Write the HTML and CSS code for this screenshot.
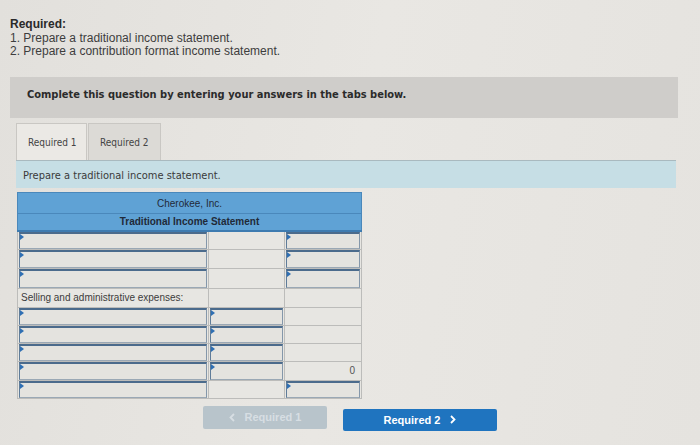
FILE: index.html
```html
<!DOCTYPE html>
<html>
<head>
<meta charset="utf-8">
<link rel="stylesheet" href="styles.css">
</head>
<body>
<div class="page">
  <div class="required">
    <div class="req-title">Required:</div>
    <div>1. Prepare a traditional income statement.</div>
    <div>2. Prepare a contribution format income statement.</div>
  </div>

  <div class="banner">Complete this question by entering your answers in the tabs below.</div>

  <div class="tabs">
    <div class="tab active">Required 1</div>
    <div class="tab">Required 2</div>
  </div>
  <div class="strip">Prepare a traditional income statement.</div>

  <table class="stmt">
    <colgroup><col class="c1"><col class="c2"><col class="c3"></colgroup>
    <tr class="h1"><td colspan="3">Cherokee, Inc.</td></tr>
    <tr class="h2"><td colspan="3">Traditional Income Statement</td></tr>
    <tr class="r18"><td><div class="inp"></div></td><td></td><td><div class="inp"></div></td></tr>
    <tr class="r19"><td><div class="inp"></div></td><td></td><td><div class="inp"></div></td></tr>
    <tr class="r20"><td><div class="inp"></div></td><td></td><td><div class="inp"></div></td></tr>
    <tr class="r19"><td class="label">Selling and administrative expenses:</td><td></td><td></td></tr>
    <tr class="r18"><td><div class="inp"></div></td><td><div class="inp"></div></td><td></td></tr>
    <tr class="r18"><td><div class="inp"></div></td><td><div class="inp"></div></td><td></td></tr>
    <tr class="r18"><td><div class="inp"></div></td><td><div class="inp"></div></td><td></td></tr>
    <tr class="r19"><td><div class="inp"></div></td><td><div class="inp"></div></td><td class="num">0</td></tr>
    <tr class="r18"><td><div class="inp"></div></td><td></td><td><div class="inp"></div></td></tr>
  </table>

  <div class="nav">
    <div class="btn prev">
      <svg class="chev" width="6" height="9" viewBox="0 0 6 9"><polyline points="5,1 1.5,4.5 5,8" fill="none" stroke="currentColor" stroke-width="1.8"/></svg>
      <span>Required 1</span>
    </div>
    <div class="btn next">
      <span>Required 2</span>
      <svg class="chev" width="6" height="9" viewBox="0 0 6 9"><polyline points="1,1 4.5,4.5 1,8" fill="none" stroke="currentColor" stroke-width="1.8"/></svg>
    </div>
  </div>
</div>
</body>
</html>
```

FILE: styles.css
```css
html, body {
  margin: 0;
  padding: 0;
}
body {
  width: 700px;
  height: 445px;
  overflow: hidden;
  background: linear-gradient(100deg, #e2e0dc 0%, #e9e7e3 50%, #e5e3df 100%);
  font-family: "Liberation Sans", Arial, sans-serif;
  color: #333;
}
.page {
  padding: 18px 0 0 0;
}
.required {
  padding-left: 10px;
  font-size: 12px;
  line-height: 13.5px;
  color: #3d3d3d;
}
.req-title {
  font-weight: bold;
  color: #2a2a2a;
}
.banner {
  margin: 18px 22px 0 10px;
  height: 41px;
  box-sizing: border-box;
  padding: 11px 0 0 17px;
  background: #cfcdca;
  font-family: "DejaVu Sans Condensed", "DejaVu Sans", sans-serif;
  font-weight: bold;
  font-size: 11px;
  color: #2b2b2b;
}
.tabs {
  display: flex;
  margin: 5px 0 0 16px;
  height: 37px;
}
.tab {
  box-sizing: border-box;
  height: 37px;
  border: 1px solid #c9c7c3;
  border-bottom: none;
  background: #dcdad6;
  font-family: "DejaVu Sans Condensed", "DejaVu Sans", sans-serif;
  font-size: 10px;
  color: #444;
  padding: 13px 0 0 11px;
}
.tab.active {
  width: 71px;
  background: #ebe9e5;
  margin-right: 1px;
}
.tab + .tab {
  width: 73px;
}
.strip {
  margin: 0 24px 0 16px;
  height: 28px;
  box-sizing: border-box;
  border-top: 1px solid #a9b9bf;
  background: #c6dee5;
  font-family: "DejaVu Sans Condensed", "DejaVu Sans", sans-serif;
  font-size: 11px;
  color: #3a3a3a;
  padding: 8px 0 0 7px;
}
.stmt {
  margin: 4px 0 0 17px;
  border-collapse: collapse;
  table-layout: fixed;
  width: 344px;
  font-size: 10px;
}
.stmt .c1 { width: 191px; }
.stmt .c2 { width: 76px; }
.stmt .c3 { width: 77px; }
.stmt td {
  border: 1px solid #bcbcba;
  padding: 0;
  background: #e7e6e2;
}
.stmt tr.r18 td { height: 17px; }
.stmt tr.r19 td { height: 18px; }
.stmt tr.r20 td { height: 19px; }
.stmt tr.h1 td, .stmt tr.h2 td {
  background: #5fa2d5;
  border: 1px solid #4a88bb;
  text-align: center;
  color: #1f2a38;
}
.stmt tr.h1 td {
  height: 19px;
  padding-top: 1px;
}
.stmt tr.h2 td {
  height: 16px;
  font-weight: bold;
  border-bottom: 2px solid #3e7bb0;
}
.stmt td.label {
  color: #3c3c3c;
  padding-left: 3px;
  font-size: 10px;
}
.stmt td.num {
  text-align: right;
  padding-right: 6px;
  color: #555;
}
.inp {
  position: relative;
  height: 100%;
  min-height: 16px;
  box-sizing: border-box;
  margin: 0 1px;
  border-top: 2px solid #4b6b8c;
  border-left: 1px solid #5f7c99;
  border-right: 1px solid #8497aa;
  border-bottom: 1px solid #9aa8b5;
  background: #e4e3df;
}
.inp::before {
  content: "";
  position: absolute;
  left: 0;
  top: 0;
  border-top: 3px solid transparent;
  border-bottom: 3px solid transparent;
  border-left: 4px solid #2f6fb3;
}
.nav {
  display: flex;
  align-items: flex-start;
  margin: 7px 0 0 203px;
}
.btn {
  box-sizing: border-box;
  font-weight: bold;
  font-size: 11px;
  display: flex;
  align-items: center;
  justify-content: center;
  gap: 10px;
  border-radius: 2px;
}
.btn.prev {
  width: 124px;
  height: 23px;
  background: #b8c4cb;
  color: #d7dee3;
}
.btn.next {
  width: 154px;
  height: 22px;
  margin: 3px 0 0 16px;
  background: #1f74bf;
  color: #ffffff;
}
.chev {
  display: block;
}
```
